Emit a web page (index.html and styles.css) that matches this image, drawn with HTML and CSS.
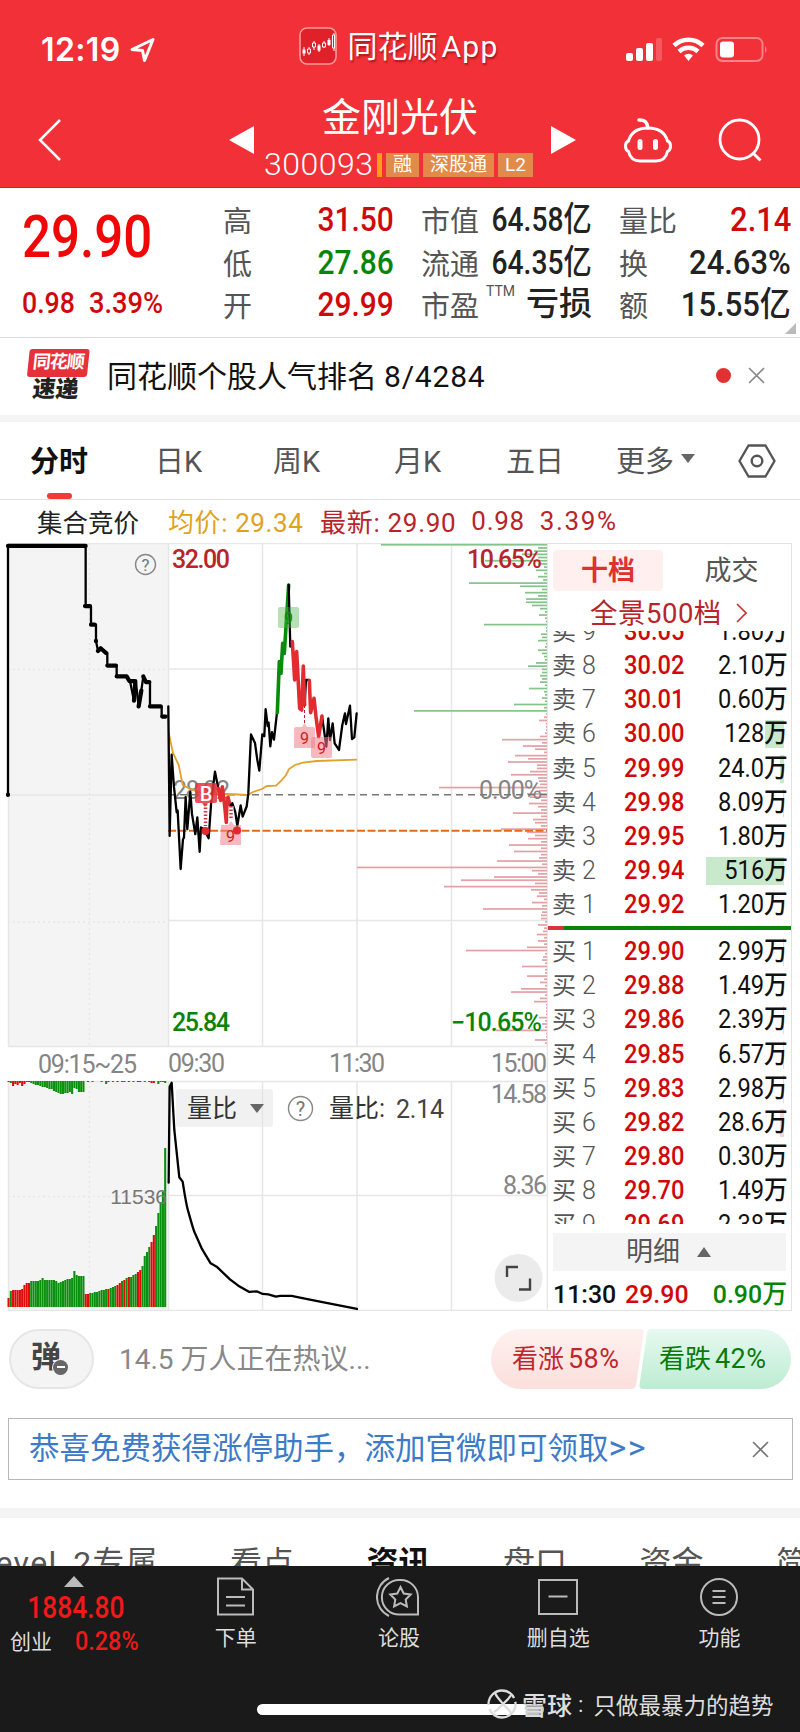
FILE: index.html
```
<!DOCTYPE html>
<html lang="zh-CN">
<head>
  <meta charset="UTF-8">
  <meta name="viewport" content="width=device-width, initial-scale=1">
  <title>金刚光伏 300093</title>
  <link rel="stylesheet" href="styles.css">
</head>
<body>

<header class="top">
  <div class="status">
    <div class="clock">12:19
      <svg width="26" height="26" viewBox="0 0 26 26"><path d="M2 12.5 23 2.5 14.5 23.5 12.5 13.5Z" fill="none" stroke="#fff" stroke-width="3" stroke-linejoin="round"/></svg>
    </div>
    <div class="brand">
      <svg width="38" height="38" viewBox="0 0 38 38">
        <rect x="1" y="1" width="36" height="36" rx="7" fill="#e0212a" stroke="#ff9a9c" stroke-width="1.6"/>
        <path d="M5 20v9M10 20v8M15 14v9M20 17v8M25 14v7M30 11v8M35 6v18" stroke="#fff" stroke-width="1"/>
        <path d="M3.5 22.500h3v4h-3zM18.500 18.500h3v5h-3zM28.500 13h3v5h-3z" fill="#fff"/>
        <path d="M8.500 22h3v4h-3zM13.500 16h3v4h-3zM23.500 16h3v4h-3zM33.500 8h2v13h-2z" fill="#e0212a" stroke="#fff"/>
      </svg>
      <span>同花顺<em>App</em></span>
    </div>
    <svg class="signal" width="144" height="26" viewBox="0 0 144 26">
      <g fill="#fff">
        <rect x="1" y="16" width="7" height="8" rx="2"/>
        <rect x="11" y="11" width="7" height="13" rx="2"/>
        <rect x="21" y="6" width="7" height="18" rx="2"/>
        <rect x="31" y="1" width="6" height="23" rx="2" opacity=".2"/>
        <rect x="95" y="4.500" width="14" height="16" rx="3"/>
        <path d="M59 18.500a7 7 0 0 1 9 0l-4.500 5.500z"/>
      </g>
      <path d="M49 8.500a21 21 0 0 1 29 0M54 14.500a14 14 0 0 1 19 0" fill="none" stroke="#fff" stroke-width="4.500"/>
      <rect x="91.500" y="1" width="46" height="23" rx="6" fill="none" stroke="#fff" stroke-opacity=".4" stroke-width="2"/>
      <path d="M140 9q3 3.500 0 7z" fill="#fff" opacity=".45"/>
    </svg>
  </div>
  <div class="nav">
    <svg class="back" width="24" height="44" viewBox="0 0 24 44"><path d="M22 2 2 22 22 42" fill="none" stroke="#fff" stroke-width="2.500"/></svg>
    <svg class="prev" width="25" height="28" viewBox="0 0 25 28"><path d="M25 0v28L0 14z" fill="#fff"/></svg>
    <div class="stock">
      <h1>金刚光伏</h1>
      <div class="code"><b class="id">300093</b><i></i><span>融</span><span>深股通</span><span>L2</span></div>
    </div>
    <svg class="next" width="25" height="28" viewBox="0 0 25 28"><path d="M0 0v28l25-14z" fill="#fff"/></svg>
    <svg class="robot" width="50" height="48" viewBox="0 0 50 48">
      <g fill="none" stroke="#fff" stroke-width="3">
        <path d="M25 12c-1-6-3-8-9-8" stroke-width="3.500" stroke-linecap="round"/>
        <path d="M25 12C14 12 8 16 5.500 25c-4 1-4 9 0 10.500C7 42 11 45 17 45h16c6 0 10-3 11.500-9.500 4-1.500 4-9.500 0-10.500C42 16 36 12 25 12z"/>
      </g>
      <rect x="14.500" y="23" width="5" height="11" rx="2.500" fill="#fff"/>
      <rect x="30" y="23" width="5" height="11" rx="2.500" fill="#fff"/>
    </svg>
    <svg class="search" width="44" height="44" viewBox="0 0 44 44"><circle cx="21.500" cy="21.500" r="19.500" fill="none" stroke="#fff" stroke-width="2.800"/><path d="M35 35l7.500 7.500" stroke="#fff" stroke-width="3"/></svg>
  </div>
</header>

<section class="quote">
  <div class="price">
    <div class="last"><span>29.90</span></div>
    <div class="change"><span>0.98</span><span>3.39%</span></div>
  </div>
  <dl class="c1">
    <dt>高</dt><dd class="up">31.50</dd>
    <dt>低</dt><dd class="down">27.86</dd>
    <dt>开</dt><dd class="up">29.99</dd>
  </dl>
  <dl class="c2">
    <dt>市值</dt><dd>64.58<em>亿</em></dd>
    <dt>流通</dt><dd>64.35<em>亿</em></dd>
    <dt>市盈<sup>TTM</sup></dt><dd class="loss">亏损</dd>
  </dl>
  <dl class="c3">
    <dt>量比</dt><dd class="up">2.14</dd>
    <dt>换</dt><dd>24.63%</dd>
    <dt>额</dt><dd>15.55<em>亿</em></dd>
  </dl>
  <svg class="corner" width="11" height="11"><path d="M11 0v11H0z" fill="#bbb"/></svg>
</section>

<section class="news">
  <div class="flag"><b>同花顺</b><strong>速递</strong></div>
  <p>同花顺个股人气排名<span>8/4284</span></p>
  <span class="dot"></span>
  <svg width="17" height="17" viewBox="0 0 17 17"><path d="M1 1l15 15M16 1 1 16" stroke="#888" stroke-width="1.600"/></svg>
</section>

<nav class="periods">
  <a class="active">分时</a><a>日K</a><a>周K</a><a>月K</a><a>五日</a><a>更多<i></i></a>
  <svg width="38" height="34" viewBox="0 0 38 34"><path d="M10.500 1.500h17L36.500 17l-9 15.500h-17L1.500 17z" fill="none" stroke="#555" stroke-width="2.400" stroke-linejoin="round"/><circle cx="19" cy="17" r="5.300" fill="none" stroke="#555" stroke-width="2.400"/></svg>
</nav>

<div class="legend">
  <span class="auction">集合竞价</span>
  <span class="avg">均价: 29.34</span>
  <span class="now">最新: 29.90</span>
  <span class="now">0.98</span>
  <span class="now">3.39%</span>
</div>

<main class="board">
  <svg class="chart" width="548" height="768" viewBox="0 543 548 768">
    <rect x="8" y="543" width="160" height="503" fill="#f4f4f4"/>
    <rect x="8" y="1081" width="160" height="229" fill="#f4f4f4"/>
    <g class="grid">
      <path d="M8 543.500H548M168 669H547M168 920.500H547M8 795H168M8 1046.500H547M8 1081.500H547M168 1195.500H547M8 1310.500H548"/>
      <path d="M8.500 543V1046M168.500 543V1046M262.500 543V1046M357 543V1046M451.500 543V1046M547.500 543V1311"/>
      <path d="M8.500 1081V1310M168.500 1081V1310M262.500 1081V1310M357 1081V1310M451.500 1081V1310"/>
      <path class="dots" d="M8 669.500H168M8 922H168M89.500 543V1046M89.500 1081V1310M8 1196.500H168"/>
    </g>

    <g id="depth"></g>
    <g id="volume"></g>

    <text x="172" y="568" class="t up" textLength="58">32.00</text>
    <text x="542" y="568" class="t up end" textLength="75">10.65%</text>
    <text x="172" y="1031" class="t dn" textLength="58">25.84</text>
    <text x="542" y="1031" class="t dn end" textLength="91">−10.65%</text>
    <text x="173" y="799" class="t" textLength="57">28.92</text>
    <text x="542" y="799" class="t end" textLength="63">0.00%</text>

    <path d="M168 794.700H547" stroke="#777" stroke-width="1.400" stroke-dasharray="7 5"/>
    <path d="M168 830.700H547" stroke="#e86a10" stroke-width="2" stroke-dasharray="8 2.500"/>

    <!-- opening auction -->
    <g transform="translate(0 530) scale(.3333 .338)" fill="none">
      <path class="ln thin" d="M24 783V47H257V225H273V280H288V328L294 358 302 350 322 364V401H350V433H380L390 447 402 505 408 452 416 522 424 475 430 433 438 450H450V522H485V552H498"/>
      <path class="ln thick" d="M24 47H257M255 225H270M273 280H284M288 328V329M294 358 302 350 318 364M322 401H348M350 433H380L388 447H406L402 505M416 522 424 475M430 433V434L438 450H448M450 522H482M487 552H497M24 783V784"/>
    </g>

    <path class="avgline" d="M168.700 733 173 753 178.700 765 182.700 785 190 789 203 793 227 794 248 795 253 792 262 789 267 786 276 785.700 281 781 286 775 289 769 295 765 303 762.700 317 761 357 759.700"/>

    <!-- continuous trading -->
    <g transform="translate(0 530) scale(.3333 .338)" fill="none">
      <path class="ln" d="M505 522 509 905 515 665 522 760 530 835 533 830 542 1003 549 915 552 910 557 790 562 885 571 775 576 840 586 900 592 850 599 952 603 880 612 885 626 912 634 800 645 715 655 765"/>
      <path class="ln red" d="M655 765 662 800 667 760 674 815 679 865 684 790 690 815"/>
      <path class="ln" d="M692 815 697 808 706 835 712 875 722 815 728 848 740 818 745 780 753 605 765 630 772 680 778 712 787 605 793 610 797 530 803 580 806 570 811 640 816 598 822 620 831 540"/>
    </g>
    <g transform="translate(160 530) scale(.3333)" fill="none">
      <path class="ln green" d="M352 548 358 395 363 430 368 340 373 370 386 165"/>
      <path class="ln" d="M386 165 391 350 397 335M434 525 438 450H448M486 558 499 650 505 565 510 630 518 580 524 640 537 660 547 585 555 550 558 582 570 527 576 627 583 622 590 550"/>
      <path class="ln red" d="M397 335 404 450 410 365 419 535 425 540 430 408 434 525M448 452 452 548 462 505 468 560 476 620 486 558"/>
    </g>

    <!-- signal marks -->
    <rect x="278" y="607" width="21" height="21" rx="2" fill="#46b446" opacity=".4"/>
    <text x="288.500" y="624" class="mark green">9</text>
    <path d="M304.500 705V724" stroke="#c02026" stroke-dasharray="3 2"/>
    <path d="M294 729q0-2 2-2h6l2.500-4 2.500 4h6q2 0 2 2v19h-21z" fill="#f0808a" opacity=".55"/>
    <text x="304.500" y="744" class="mark">9</text>
    <rect x="311" y="737" width="21" height="21" rx="2" fill="#f0808a" opacity=".55"/>
    <text x="321.500" y="754" class="mark">9</text>
    <path d="M205.500 804V826M231 806V820" stroke="#fff" stroke-width="5"/>
    <path d="M205.500 804V826M231 806V820" stroke="#d0353b" stroke-width="3.500" stroke-dasharray="1.500 2"/>
    <path d="M195 785q0-2 2-2h18q2 0 2 2v16q0 2-2 2h-7l-3 4-3-4h-5q-2 0-2-2z" fill="#e4343c" opacity=".85"/>
    <text x="206" y="801" class="bmark">B</text>
    <path d="M221 825h7l3-4 3 4h7v20h-21z" fill="#f0808a" opacity=".55"/>
    <text x="230.500" y="842" class="mark">9</text>
    <circle cx="205.500" cy="831" r="4" fill="#e22830"/>
    <circle cx="237" cy="830.500" r="4" fill="#e22830"/>

    <circle cx="145.500" cy="564.500" r="10" class="ring"/>
    <text x="145.500" y="571" class="q">?</text>

    <text x="38" y="1073" class="t" textLength="99">09:15~25</text>
    <text x="168" y="1072" class="t" textLength="57">09:30</text>
    <text x="329" y="1072" class="t" textLength="56">11:30</text>
    <text x="547" y="1072" class="t end" textLength="56">15:00</text>
    <text x="547" y="1102.500" class="t end" textLength="56">14.58</text>
    <text x="547" y="1194" class="t end" textLength="44">8.36</text>
    <text x="167" y="1204" class="vol end">11536</text>

    <rect x="176" y="1089" width="97" height="38" rx="3" fill="#eee" opacity=".8"/>
    <path d="M262.500 1089V1127" stroke="#e2e2e2"/>
    <text x="187" y="1117" class="cn" textLength="50">量比</text>
    <path d="M250 1104h14l-7 9z" fill="#666"/>
    <circle cx="300.500" cy="1108.500" r="12" class="ring"/>
    <text x="300.500" y="1116" class="q big">?</text>
    <text x="329" y="1117" class="cn">量比:</text>
    <text x="396" y="1118" class="t dark" textLength="48">2.14</text>

    <g transform="translate(0 1040) scale(.3333)" fill="none">
      <path class="ln ratio" d="M506 428 509 140 515 128 523 270 538 412 548 425C555 470 560 500 565 515 575 550 580 570 585 580L605 625 632 670 650 680 690 718 715 737 748 756 770 754 788 762 805 763 828 770 840 768H875L900 773 960 785 1071 807"/>
    </g>
    <circle cx="518.500" cy="1278" r="24" fill="#ebebeb"/>
    <path d="M507 1277v-10h11M519 1289.500h11v-11" fill="none" stroke="#444" stroke-width="2.400"/>
  </svg>

  <aside class="book">
    <div class="book-tabs"><a class="active">十档</a><a>成交</a></div>
    <div class="all">全景500档 <svg width="12" height="20" viewBox="0 0 12 20"><path d="M2 1l9 9-9 9" fill="none" stroke="#c33" stroke-width="1.600"/></svg></div>
    <div class="levels" id="levels"></div>
    <div class="detail"><span>明细</span><i></i></div>
    <div class="tick"><span>11:30</span><span class="up">29.90</span><span class="down">0.90万</span></div>
  </aside>
</main>

<section class="talk">
  <div class="pill">弹<i></i></div>
  <p>14.5 万人正在热议...</p>
  <svg width="300" height="60" viewBox="0 0 300 60">
    <defs>
      <linearGradient id="pink" x2="0" y2="1"><stop stop-color="#fef1ef"/><stop offset="1" stop-color="#fbdfdc"/></linearGradient>
      <linearGradient id="mint" x2="0" y2="1"><stop stop-color="#e6f9f0"/><stop offset="1" stop-color="#bdecd2"/></linearGradient>
    </defs>
    <path d="M30 0H149q4 0 3.500 4L145 56q-1 4-5 4H30A30 30 0 0 1 30 0z" fill="url(#pink)"/>
    <path d="M160 0H270a30 30 0 0 1 0 60H152q-4 0-3.500-4L156 4q1-4 4-4z" fill="url(#mint)"/>
    <text x="21" y="39" fill="#c0272d">看涨</text>
    <text x="77" y="39" fill="#c0272d" class="pct">58%</text>
    <text x="168" y="39" fill="#087a08">看跌</text>
    <text x="224" y="39" fill="#087a08" class="pct">42%</text>
  </svg>
</section>

<section class="ad">
  <span>恭喜免费获得涨停助手，添加官微即可领取<em>&gt;&gt;</em></span>
  <svg width="17" height="17" viewBox="0 0 17 17"><path d="M1 1l15 15M16 1 1 16" stroke="#777" stroke-width="1.600"/></svg>
</section>

<nav class="more">
  <a>Level_2专属</a><a>看点</a><a class="active">资讯</a><a>盘口</a><a>资金</a><a>简况</a>
</nav>

<footer>
  <div class="index">
    <i></i>
    <b>1884.80</b>
    <p>创业<span>0.28%</span></p>
  </div>
  <div class="item"><svg width="46" height="42" viewBox="0 0 46 42"><path d="M5 2.500h24l11 11v25H5zM29 2.500v11h11M13 21h19M13 29.500h19"/></svg>下单</div>
  <div class="item"><svg width="46" height="42" viewBox="0 0 46 42"><path d="M13 2a21 21 0 0 0 0 38M24.500 4a17.300 17.300 0 1 0 0 34.500H42V21A17.300 17.300 0 0 0 24.500 4zM24.500 11l3.200 6.500 7 1-5 5 1.200 7-6.400-3.300-6.400 3.300 1.200-7-5-5 7-1z"/></svg>论股</div>
  <div class="item"><svg width="46" height="42" viewBox="0 0 46 42"><path d="M4 4h38v34H4zM13.500 20.500h19"/></svg>删自选</div>
  <div class="item"><svg width="46" height="42" viewBox="0 0 46 42"><circle cx="23" cy="21" r="18"/><path d="M16.500 15h13M16.500 21h13M16.500 27h13"/></svg>功能</div>
  <div class="home"></div>
  <div class="mark-by">
    <svg width="32" height="32" viewBox="0 0 32 32" fill="none" stroke="#ddd" stroke-width="2.300"><circle cx="16" cy="16" r="13.500" stroke-dasharray="37 4"/><path d="M9 5c2 5 6 8 8 11s5 4 8 9M25 7c-3 5-5 6-8 9s-5 6-9 8"/></svg>
    <b>雪球</b><em>:</em>只做最暴力的趋势
  </div>
</footer>

<script src="chart.js"></script>
</body>
</html>
```

FILE: styles.css
```
* {
  box-sizing: border-box;
}
body {
  width: 800px;
  height: 1732px;
  margin: 0;
  overflow: hidden;
  background: #fff;
  color: #222;
  font-family: Roboto, "Noto Sans CJK SC", sans-serif;
  font-size: 28px;
}
h1, p, dl, dd {
  margin: 0;
  font-weight: 400;
}
i, em {
  font-style: normal;
}
svg {
  display: block;
  flex: none;
}
.up {
  color: #d0080c;
  fill: #b9242a;
}
.down {
  color: #088408;
}

/* header */
.top {
  height: 188px;
  background: #f23037;
  border-bottom: 1px solid #c9262c;
  color: #fff;
}
.status {
  display: flex;
  align-items: center;
  height: 92px;
  padding: 6px 31px 0 41px;
}
.clock {
  display: flex;
  align-items: center;
  gap: 9px;
  width: 258px;
  margin-top: 1px;
  font: 600 32px Inter, sans-serif;
  letter-spacing: .4px;
}
.brand {
  display: flex;
  align-items: center;
  gap: 11px;
  width: 327px;
  height: 40px;
  margin-top: -6px;
  font-size: 30px;
  text-shadow: 1px 2px 2px rgba(80, 0, 0, .5);
}
.brand span {
  margin-top: -5px;
}
.brand em {
  margin-left: 4px;
  letter-spacing: 1.2px;
}
.signal {
  margin-top: 2px;
}
.nav {
  display: flex;
  align-items: center;
  height: 96px;
  padding: 0 38px;
}
.prev {
  margin-left: 167px;
}
.stock {
  width: 299px;
  height: 96px;
  padding-left: 10px;
}
.stock h1 {
  height: 57px;
  padding-left: 58px;
  font-size: 39px;
  line-height: 52px;
}
.code {
  display: flex;
  align-items: center;
  gap: 4px;
  height: 31px;
}
.code .id {
  width: 109px;
  margin-top: -2px;
  font-size: 32px;
  font-weight: 350;
  letter-spacing: .5px;
}
.code i {
  width: 5px;
  height: 24px;
  background: #ff9c1a;
}
.code span {
  height: 24px;
  padding: 0 7px;
  background: #e38a48;
  font-size: 19px;
  line-height: 23px;
}
.robot {
  margin-left: 47px;
}
.search {
  margin-left: 45px;
}

/* quote */
.quote {
  position: relative;
  display: flex;
  height: 150px;
  padding-top: 10px;
  border-bottom: 1px solid #ddd;
}
.price {
  width: 223px;
  padding-left: 22px;
}
.last {
  height: 76px;
  color: #f00808;
  font-size: 59px;
  font-weight: 500;
  line-height: 77px;
}
.last span, .change span {
  display: inline-block;
  transform: scaleX(.865);
  transform-origin: left;
}
.change {
  display: flex;
  color: #d0080c;
  font-size: 29px;
  font-weight: 500;
  line-height: 58px;
}
.change span + span {
  transform: scaleX(.94);
}
.change span:first-child {
  width: 67px;
  transform: scaleX(.92);
}
dl {
  display: grid;
  grid-template-columns: auto minmax(0, 1fr);
  grid-auto-rows: 42.5px;
  align-items: center;
  flex: none;
}
.c1 { width: 171px; }
.c2 { width: 171px; margin-left: 27px; }
.c3 { width: 172px; margin-left: 27px; }
dt {
  position: relative;
  color: #555;
  font-size: 29px;
  white-space: nowrap;
}
dt sup {
  position: absolute;
  left: 65px;
  top: 1px;
  font-size: 14px;
  line-height: 14px;
}
dd {
  justify-self: end;
  display: flex;
  align-items: center;
  transform: scaleX(.88);
  transform-origin: right;
  font-size: 34px;
  font-weight: 500;
  line-height: 40px;
  white-space: nowrap;
}
.c2 dd { transform: scaleX(.83); }
.c3 dd { transform: scaleX(.91); }
dd em {
  font-size: 34px;
}
.c2 dd.loss {
  transform: none;
  font-size: 33px;
}
.corner {
  position: absolute;
  right: 4px;
  bottom: 3px;
}

/* news strip */
.news {
  display: flex;
  align-items: center;
  height: 84px;
  padding: 0 33px 2px 26px;
  border-bottom: 7px solid #f4f4f4;
}
.flag {
  width: 60px;
  margin: 0 20px 0 1px;
  text-align: center;
  transform: skewX(-6deg);
}
.flag b {
  display: block;
  height: 28px;
  border-radius: 3px;
  background: #e5323a;
  color: #fff;
  font-size: 18px;
  line-height: 26px;
  letter-spacing: -1px;
}
.flag strong {
  display: block;
  font-size: 23px;
  font-weight: 900;
  line-height: 25px;
}
.news p {
  width: 609px;
  margin-top: -4px;
  color: #111;
  font-size: 30px;
}
.news p span {
  margin-left: 7px;
  letter-spacing: .8px;
}
.dot {
  width: 15px;
  height: 15px;
  margin-right: 17px;
  border-radius: 50%;
  background: #e33131;
}

/* period tabs */
.periods {
  display: flex;
  align-items: center;
  height: 78px;
  padding-left: 30px;
  border-bottom: 1px solid #e2e2e2;
  color: #555;
  font-size: 29px;
}
.periods a {
  position: relative;
  display: flex;
  align-items: center;
  flex: none;
  margin-top: -4px;
}
.periods a:nth-child(1) { width: 125px; }
.periods a:nth-child(2) { width: 118px; }
.periods a:nth-child(3) { width: 121px; }
.periods a:nth-child(4) { width: 112px; }
.periods a:nth-child(5) { width: 110px; }
.periods a:nth-child(6) { width: 122px; }
.periods .active {
  color: #111;
  font-weight: 700;
}
.periods .active::after {
  content: "";
  position: absolute;
  left: 17px;
  bottom: -19px;
  width: 25px;
  height: 6px;
  border-radius: 3px;
  background: #f23a36;
}
.periods i {
  margin-left: 7px;
  border: 7px solid transparent;
  border-top: 9px solid #666;
  border-bottom: 0;
}

/* legend */
.legend {
  display: flex;
  align-items: center;
  height: 43px;
  padding: 0 0 2px 37px;
  font-size: 26px;
  white-space: nowrap;
}
.auction { width: 131px; font-size: 25.5px; }
.avg { width: 152px; color: #dfa21e; letter-spacing: .6px; }
.now { color: #b9242a; margin-right: 15px; letter-spacing: .7px; }
.now:last-child { letter-spacing: 1.6px; }

/* chart */
.board {
  display: flex;
  height: 768px;
}
.chart .grid path {
  fill: none;
  stroke: #e6e6e6;
  stroke-width: 1.5;
}
.chart .grid .dots {
  stroke-dasharray: 2 3;
}
.ln {
  stroke: #000;
  stroke-width: 2.3;
  stroke-linejoin: round;
  stroke-linecap: round;
  vector-effect: non-scaling-stroke;
}
.ln.thick { stroke-width: 4.2; }
.ln.red { stroke: #e22c30; stroke-width: 3.6; }
.ln.green { stroke: #078c0c; stroke-width: 3.6; }
.avgline {
  fill: none;
  stroke: #e3a02c;
  stroke-width: 1.8;
}
.t {
  fill: #858585;
  font-size: 25px;
  font-weight: 450;
}
.t.up { fill: #b9242a; font-weight: 500; }
.t.dn { fill: #088408; font-weight: 500; }
.t.dark { fill: #444; }
.end { text-anchor: end; }
.vol {
  fill: #777;
  font: 21px "Liberation Sans", sans-serif;
}
.cn {
  fill: #333;
  font-size: 25px;
}
.mark, .bmark, .q {
  fill: #c81e26;
  font-size: 16px;
  text-anchor: middle;
}
.mark.green { fill: #078c0c; }
.bmark { fill: #fff; font-size: 20px; font-weight: 500; }
.q { fill: #777; font-size: 17px; }
.q.big { font-size: 20px; }
.ring {
  fill: none;
  stroke: #888;
  stroke-width: 1.4;
}

/* order book */
.book {
  width: 244px;
  padding: 6px 5px 0 5px;
  border: 1px solid #e2e2e2;
  border-left: 0;
}
.book-tabs {
  display: flex;
  height: 41px;
  color: #555;
  font-size: 27px;
  line-height: 42px;
  text-align: center;
}
.book-tabs a {
  width: 110px;
}
.book-tabs a + a {
  flex: 1;
  padding-left: 14px;
}
.book-tabs .active {
  border-radius: 4px;
  background: #fff0ef;
  color: #e0302f;
  font-weight: 700;
}
.all {
  display: flex;
  align-items: center;
  gap: 13px;
  height: 40px;
  padding: 0 0 0 37px;
  color: #b9242a;
  font-size: 27.5px;
  letter-spacing: .5px;
}
.all svg {
  margin-top: 4px;
}
.levels {
  height: 593px;
  margin: 0 -5px;
  overflow: hidden;
}
.level {
  display: flex;
  align-items: baseline;
  position: relative;
  height: 34.13px;
  padding: 0 3px 0 4px;
  font-size: 26px;
  line-height: 32px;
}
.level:first-child {
  margin-top: -16px;
}
.level span {
  width: 30px;
  color: #555;
  font-size: 24px;
}
.level u {
  width: 42px;
  color: #555;
  font-size: 25px;
  font-weight: 350;
  text-decoration: none;
}
.level b {
  color: #d0080c;
  font-weight: 500;
  transform: scaleX(.91);
  transform-origin: left;
}
.level s {
  position: relative;
  margin-left: auto;
  color: #111;
  font-size: 26px;
  font-weight: 450;
  text-decoration: none;
  transform: scaleX(.91);
  transform-origin: right;
}
.level .size {
  position: absolute;
  right: 7px;
  top: 3px;
  height: 28px;
  background: #c8e9cb;
}
.level .size.buy {
  background: #f7d4d6;
}
.split {
  height: 4px;
  margin: 4px 0 5px;
  background: linear-gradient(90deg, #d8343a 16px, #088408 16px);
}
.detail {
  display: flex;
  align-items: center;
  justify-content: center;
  gap: 17px;
  height: 38px;
  margin-top: 9px;
  padding-right: 2px;
  background: #f4f4f4;
  color: #555;
  font-size: 27px;
}
.detail span {
  margin-top: -5px;
}
.detail i {
  border: 7px solid transparent;
  border-top: 0;
  border-bottom: 10px solid #666;
}
.tick {
  display: flex;
  height: 44px;
  margin-right: -1px;
  color: #111;
  font-size: 26.5px;
  font-weight: 500;
  line-height: 46px;
}
.tick span { transform: scaleX(.94); transform-origin: left; }
.tick span:nth-child(1) { width: 72px; }
.tick span:nth-child(3) { margin-left: auto; transform-origin: right; }

/* talk */
.talk {
  display: flex;
  align-items: center;
  height: 95px;
  padding: 0 9px;
}
.pill {
  position: relative;
  width: 85px;
  height: 60px;
  margin-right: 25px;
  padding-left: 20px;
  border: 2px solid #e6e6e6;
  border-radius: 30px;
  background: #f4f4f4;
  color: #444;
  font-size: 30px;
  font-weight: 700;
  line-height: 51px;
}
.pill i {
  position: absolute;
  left: 42px;
  top: 29px;
  width: 15px;
  height: 15px;
  border-radius: 50%;
  background: linear-gradient(#fff, #fff) center / 8px 2px no-repeat #666;
  box-shadow: 0 0 0 1px #f4f4f4;
}
.talk p {
  width: 372px;
  margin-top: -4px;
  color: #888;
  font-size: 28px;
}
.talk text {
  font-size: 26px;
}
.talk .pct {
  font-size: 27px;
  letter-spacing: .4px;
}

/* promotion */
.ad {
  display: flex;
  align-items: center;
  justify-content: space-between;
  width: 785px;
  height: 62px;
  margin: 12px 0 28px 8px;
  padding: 0 23px 0 20px;
  border: 1px solid #b8b8b8;
  color: #3b7bc8;
  font-size: 30.5px;
  white-space: nowrap;
}
.ad span {
  margin-top: -6px;
}
.ad em {
  font-size: 34px;
  letter-spacing: 1.5px;
}

/* lower tabs, cut off by the toolbar */
.more {
  position: relative;
  display: flex;
  height: 58px;
  padding-top: 27px;
  border-top: 10px solid #f4f4f4;
  overflow: hidden;
  color: #555;
  font-size: 32px;
  line-height: 36px;
  white-space: nowrap;
}
.more a {
  flex: none;
  width: 136.5px;
}
.more a:first-child {
  width: 253px;
  margin-left: -23px;
  letter-spacing: 1.3px;
}
.more .active {
  color: #111;
  font-weight: 700;
}

/* toolbar */
footer {
  position: relative;
  display: flex;
  height: 166px;
  padding-top: 10px;
  background: #1a1a1a;
  color: #ddd;
  font-size: 21px;
}
.index {
  width: 156px;
  text-align: center;
}
.index i {
  display: block;
  width: 20px;
  margin: 0 auto;
  border: 10px solid transparent;
  border-top: 0;
  border-bottom: 11px solid #bbb;
  position: relative;
  left: -4px;
}
.index b {
  display: block;
  height: 43px;
  padding-right: 4px;
  color: #f01818;
  font-size: 31px;
  font-weight: 500;
  line-height: 41px;
  transform: scaleX(.85);
}
.index p {
  display: flex;
  gap: 23px;
  padding-left: 10px;
  line-height: 24px;
}
.index span {
  color: #f01818;
  font-size: 26px;
  font-weight: 500;
  line-height: 22px;
  transform: scaleX(.9);
  transform-origin: left;
}
.item {
  width: 162px;
  display: flex;
  flex-direction: column;
  align-items: center;
  line-height: 40px;
}
.item:nth-child(3) {
  padding-left: 4px;
}
.item svg {
  fill: none;
  stroke: #bbb;
  stroke-width: 2;
}
.home {
  position: absolute;
  left: 257px;
  top: 138px;
  width: 287px;
  height: 11px;
  border-radius: 6px;
  background: #fff;
}
.mark-by {
  position: absolute;
  left: 486px;
  top: 120px;
  display: flex;
  align-items: center;
  height: 36px;
  color: #ddd;
  font-size: 22.5px;
  white-space: nowrap;
  text-shadow: 0 0 2px #222;
}
.mark-by b {
  margin-left: 4px;
  font-size: 25px;
  font-weight: 500;
}
.mark-by em {
  margin: 0 10px 0 6px;
}
```

FILE: chart.js
```
const NS = 'http://www.w3.org/2000/svg';

function bar(parent, x, y, w, h, fill) {
  const r = document.createElementNS(NS, 'rect');
  r.setAttribute('x', x);
  r.setAttribute('y', y);
  r.setAttribute('width', w);
  r.setAttribute('height', h);
  r.setAttribute('fill', fill);
  parent.appendChild(r);
}

// chips by price, top to bottom
const chips = [
  166, 9, 13, 25, 9, 62, 9, 3, 11, 3, 9, 4, 78, 27, 5, 22, 9, 21, 21, 15, 7, 2, 8, 2, 1, 63, 1, 1, 6, 5, 9, 1, 2,
  9, 5, 3, 2, 11, 19, 5, 5, 7, 5, 7, 2, 18, 3, 2, 5, 2, 33, 3, 133,
  1, 3, 8, 1, 1, 1, 2, 7, 45, 5, 24, 12, 3, 32, 19, 39, 10, 10, 17, 36, 9, 8, 7, 108, 8, 20, 17, 6, 18, 9, 6, 34,
  6, 14, 12, 6, 46, 20, 12, 19, 6, 38, 6, 33, 6, 8, 50, 5, 190, 15, 9, 53, 86, 12, 103, 16, 8, 10, 3, 15, 5, 64,
  5, 6, 6, 2, 9, 3, 4, 10, 3, 9, 3, 20, 81, 2, 4, 5, 2, 25, 2, 2, 20, 3, 7, 2, 26, 36, 2, 7, 13, 1, 1, 1, 1, 8,
  2, 5, 2, 51, 1, 1, 12, 2
];
const depth = document.getElementById('depth');
chips.forEach((n, i) => bar(depth, 547 - n, 543.9 + i * 3.195, n, 1.7, i < 53 ? '#84c488' : '#e3a0a5'));

const volume = document.getElementById('volume');
const heights = [
  9, 16, 17, 17, 17, 17, 18, 22, 24, 24, 26, 26, 26, 26, 27, 29, 27, 27, 27, 27, 27, 26, 24, 25, 26, 27, 28, 28, 29,
  36, 32, 31, 31, 31, 13, 13, 14, 14, 15, 15, 16, 17, 17, 18, 18, 19, 20, 21, 22, 24, 26, 27, 29, 30, 30, 32, 33, 35,
  37, 41, 51, 55, 60, 65, 72, 81, 94, 105, 115, 159
];
const reds = [0, 2, 3, 4, 5, 6, 7, 8, 9, 34, 35, 44, 48, 49, 51, 53, 57, 58, 63, 64];
const upper = [
  1, 2, 5, 3, 4, 2, 5, 3, 1, 1, 2, 3, 4, 4, 5, 6, 6, 7, 8, 8, 10, 11, 12, 13, 13, 12, 12, 11, 13, 7, 8, 11, 11, 11,
  0, 1, 0, 1, 0, 0, 0, 1, 0, 3, 1, 0, 1, 0, 1, 0, 1, 1, 0, 1, 0, 1, 0, 1, 1, 0, 1, 0, 1, 2, 2, 0, 3, 1, 1, 2
];
heights.forEach((h, i) => {
  const fill = reds.includes(i) ? '#e00c0c' : '#0c900f';
  bar(volume, 7.5 + i * 2.27, 1307 - h, 2.1, h, fill);
  if (upper[i]) bar(volume, 7.5 + i * 2.27, 1081, 2.1, upper[i], fill);
});

// [side, level, price, size, bar width]
const book = [
  ['卖', 9, '30.05', '1.80', 0], ['卖', 8, '30.02', '2.10', 0], ['卖', 7, '30.01', '0.60', 0],
  ['卖', 6, '30.00', '128', 19], ['卖', 5, '29.99', '24.0', 4], ['卖', 4, '29.98', '8.09', 1],
  ['卖', 3, '29.95', '1.80', 0], ['卖', 2, '29.94', '516', 78], ['卖', 1, '29.92', '1.20', 0],
  ['买', 1, '29.90', '2.99', 1], ['买', 2, '29.88', '1.49', 0], ['买', 3, '29.86', '2.39', 1],
  ['买', 4, '29.85', '6.57', 1], ['买', 5, '29.83', '2.98', 1], ['买', 6, '29.82', '28.6', 4],
  ['买', 7, '29.80', '0.30', 0], ['买', 8, '29.70', '1.49', 0], ['买', 9, '29.69', '2.38', 0]
];
document.getElementById('levels').innerHTML = book.map(([side, n, price, size, w], i) =>
  (i === 9 ? '<div class="split"></div>' : '') +
  `<div class="level"><div class="size ${i > 8 ? 'buy' : ''}" style="width:${w}px"></div>` +
  `<span>${side}</span><u>${n}</u><b>${price}</b><s>${size}万</s></div>`
).join('');
```
